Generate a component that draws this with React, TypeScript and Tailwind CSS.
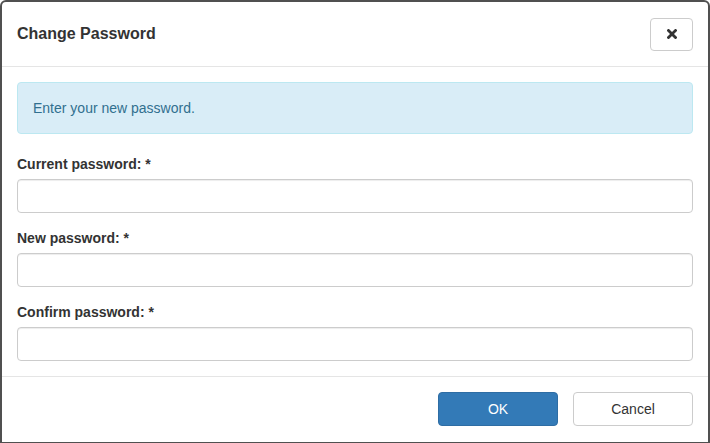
export default function App() {
  return (
    <div
      className="flex h-[443px] w-[710px] flex-col overflow-hidden rounded-t-[6px] border-b border-l-2 border-r-2 border-t-2 border-[#505050] bg-white text-[14px] text-[#333]"
      style={{ fontFamily: '"Liberation Sans", Arial, sans-serif' }}
    >
      <div className="flex h-[65px] shrink-0 items-center justify-between border-b border-[#e5e5e5] px-[15px]">
        <h4 className="text-[16px] font-bold leading-[20px]">Change Password</h4>
        <button className="flex h-[33px] w-[43px] items-center justify-center rounded-[4px] border border-[#ccc] bg-white">
          <svg width="10" height="10" viewBox="0 0 10 10">
            <path d="M1.5 1.5 L8.5 8.5 M8.5 1.5 L1.5 8.5" stroke="#333" strokeWidth="2.8" strokeLinecap="square" />
          </svg>
        </button>
      </div>

      <div className="flex flex-col p-[15px]">
        <div className="mb-[20px] rounded-[4px] border border-[#bce8f1] bg-[#d9edf7] p-[15px] leading-[20px] text-[#31708f]">
          Enter your new password.
        </div>
        {["Current password:", "New password:", "Confirm password:"].map((label, i) => (
          <div key={label} className={i < 2 ? "mb-[15px]" : ""}>
            <label className="mb-[5px] block font-bold leading-[20px]">
              {label} *
            </label>
            <input
              type="password"
              className="block h-[34px] w-full rounded-[4px] border border-[#ccc] px-3 shadow-[inset_0_1px_1px_rgba(0,0,0,0.075)] outline-none"
            />
          </div>
        ))}
      </div>

      <div className="flex justify-end gap-[15px] border-t border-[#e5e5e5] p-[15px]">
        <button className="h-[34px] w-[120px] rounded-[4px] border border-[#2e6da4] bg-[#337ab7] text-white">
          OK
        </button>
        <button className="h-[34px] w-[120px] rounded-[4px] border border-[#ccc] bg-white text-[#333]">
          Cancel
        </button>
      </div>
    </div>
  );
}
